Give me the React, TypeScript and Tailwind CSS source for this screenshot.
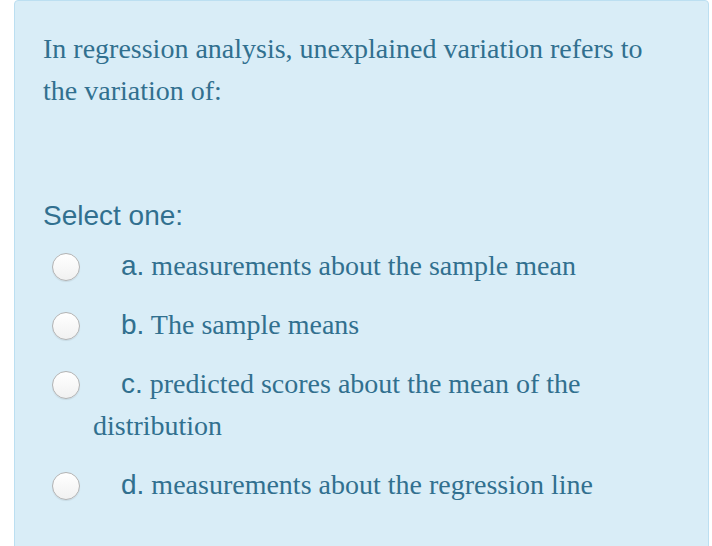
import React from "react";

const serif = "font-['Liberation_Serif','Times_New_Roman',serif]";
const sans = "font-['Liberation_Sans',Arial,sans-serif]";

function Radio() {
  return (
    <span className="inline-block indent-0 w-[28px] h-[28px] rounded-full border border-[#b3b3b3] bg-gradient-to-b from-white to-[#f1f1f1] shadow-[0_1px_1px_rgba(0,0,0,0.08)] align-[-6px] mr-[41px]" />
  );
}

function Option({ letter, text }: { letter: string; text: string }) {
  return (
    <div className={`pl-[50px] indent-[-41px] py-[8.4px] leading-[42px] text-[28px] ${serif}`}>
      <Radio />
      <span className={sans}>{letter}.</span> {text}
    </div>
  );
}

export default function App() {
  return (
    <div className="w-[712px] h-[546px] bg-white overflow-hidden">
      <div className="ml-[14px] w-[695px] min-h-[600px] border border-[#bcdff1] rounded-[4px] bg-[#d9edf7] pt-[27px] px-[28px] text-[#31708f]">
        <p className={`${serif} text-[28px] leading-[42px]`}>
          In regression analysis, unexplained variation refers to the variation of:
        </p>
        <div className={`${sans} text-[28px] leading-[42px] mt-[83px]`}>Select one:</div>
        <Option letter="a" text="measurements about the sample mean" />
        <Option letter="b" text="The sample means" />
        <Option letter="c" text="predicted scores about the mean of the distribution" />
        <Option letter="d" text="measurements about the regression line" />
      </div>
    </div>
  );
}
